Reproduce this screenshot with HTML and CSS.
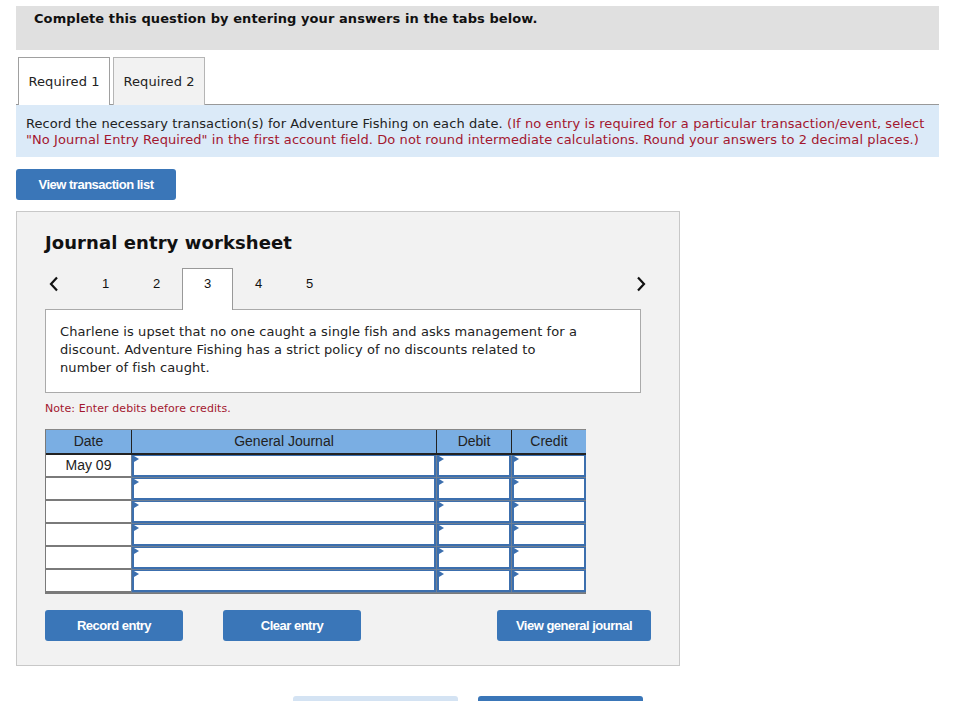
FILE: index.html
```html
<!DOCTYPE html>
<html>
<head>
<meta charset="utf-8">
<link rel="stylesheet" href="styles.css">
</head>
<body>
<div class="page">
  <div class="banner">Complete this question by entering your answers in the tabs below.</div>

  <div class="tabs">
    <div class="tab active">Required 1</div>
    <div class="tab">Required 2</div>
  </div>

  <div class="info">Record the necessary transaction(s) for Adventure Fishing on each date. <span class="red">(If no entry is required for a particular transaction/event, select "No Journal Entry Required" in the first account field. Do not round intermediate calculations. Round your answers to 2 decimal places.)</span></div>

  <button class="btn btn-list">View transaction list</button>

  <div class="panel">
    <h2 class="title">Journal entry worksheet</h2>
    <div class="nav">
      <span class="arrow">
        <svg width="10" height="16" viewBox="0 0 10 16"><path d="M8 1.5 L2 8 L8 14.5" fill="none" stroke="#111" stroke-width="2.2"/></svg>
      </span>
      <div class="steps">
        <span class="step">1</span>
        <span class="step">2</span>
        <span class="step current">3</span>
        <span class="step">4</span>
        <span class="step">5</span>
      </div>
      <span class="arrow arrow-right">
        <svg width="10" height="16" viewBox="0 0 10 16"><path d="M2 1.5 L8 8 L2 14.5" fill="none" stroke="#111" stroke-width="2.2"/></svg>
      </span>
    </div>
    <div class="desc">Charlene is upset that no one caught a single fish and asks management for a discount. Adventure Fishing has a strict policy of no discounts related to number of fish caught.</div>
    <div class="note">Note: Enter debits before credits.</div>

    <div class="journal">
      <div class="head">Date</div>
      <div class="head">General Journal</div>
      <div class="head">Debit</div>
      <div class="head">Credit</div>

      <div class="date">May 09</div><div class="inp"></div><div class="inp"></div><div class="inp"></div>
      <div class="date"></div><div class="inp"></div><div class="inp"></div><div class="inp"></div>
      <div class="date"></div><div class="inp"></div><div class="inp"></div><div class="inp"></div>
      <div class="date"></div><div class="inp"></div><div class="inp"></div><div class="inp"></div>
      <div class="date"></div><div class="inp"></div><div class="inp"></div><div class="inp"></div>
      <div class="date"></div><div class="inp"></div><div class="inp"></div><div class="inp"></div>
    </div>

    <div class="actions">
      <button class="btn btn-record">Record entry</button>
      <button class="btn btn-clear">Clear entry</button>
      <button class="btn btn-view">View general journal</button>
    </div>
  </div>

  <div class="bottom">
    <div class="bb light"></div>
    <div class="bb dark"></div>
  </div>
</div>
</body>
</html>
```

FILE: styles.css
```css
* { box-sizing: border-box; }
html, body { margin: 0; padding: 0; background: #fff; }
body {
  font-family: "DejaVu Sans", Verdana, sans-serif;
  font-size: 13px;
  letter-spacing: 0.08px;
  color: #222;
  overflow: hidden;
  height: 701px;
}
.page {
  padding: 6px 14px 0 16px;
}
.banner {
  background: #e0e0e0;
  height: 44px;
  padding: 4px 0 0 18px;
  font-weight: bold;
  font-size: 13px;
  line-height: 18px;
  color: #111;
}
.tabs {
  margin-top: 7px;
  display: flex;
  gap: 3px;
  padding-left: 2px;
  border-bottom: 1px solid #999;
  height: 48px;
}
.tab {
  width: 92px;
  height: 48px;
  border: 1px solid #b5b5b5;
  border-bottom: none;
  background: #f2f2f2;
  text-align: center;
  line-height: 48px;
  font-size: 13px;
  color: #222;
}
.tab.active {
  background: #fff;
  border-color: #a0a0a0;
  height: 48px;
  margin-bottom: -1px;
  position: relative;
}
.info {
  background: #dbeaf8;
  padding: 11px 10px 9px 10px;
  line-height: 16px;
  font-size: 13px;
  color: #222;
}
.red { color: #a3172f; }
.btn {
  display: block;
  border: none;
  border-radius: 3px;
  background: #3a76b8;
  color: #fff;
  font-family: "Liberation Sans Narrow", "Liberation Sans", Arial, sans-serif;
  font-stretch: condensed;
  font-weight: bold;
  font-size: 13px;
  letter-spacing: -0.5px;
  height: 31px;
  padding: 0;
  cursor: pointer;
}
.btn-list {
  margin-top: 12px;
  width: 160px;
}
.panel {
  margin-top: 11px;
  width: 664px;
  background: #f2f2f2;
  border: 1px solid #c8c8c8;
  padding: 20px 0 24px 28px;
}
.title {
  margin: 0;
  font-size: 18px;
  font-weight: bold;
  line-height: 22px;
  color: #111;
}
.nav {
  margin-top: 14px;
  display: flex;
  align-items: stretch;
  height: 41px;
  width: 611px;
  position: relative;
}
.arrow {
  display: flex;
  align-items: center;
  padding-left: 4px;
  width: 35px;
  padding-bottom: 10px;
}
.arrow-right {
  margin-left: auto;
  width: auto;
  padding-left: 0;
  padding-right: 10px;
}
.steps {
  display: flex;
}
.step {
  width: 51px;
  text-align: center;
  font-family: "Liberation Sans", Arial, sans-serif;
  font-size: 13px;
  letter-spacing: 0;
  line-height: 32px;
  color: #111;
}
.step.current {
  background: #fff;
  border: 1px solid #999;
  border-bottom: none;
  height: 42px;
  line-height: 30px;
  position: relative;
  z-index: 1;
}
.desc {
  width: 596px;
  background: #fff;
  border: 1px solid #aaa;
  padding: 13px 60px 15px 14px;
  line-height: 18px;
  font-size: 13px;
  color: #222;
}
.note {
  margin-top: 9px;
  color: #a3172f;
  font-size: 11px;
  line-height: 14px;
}
.journal {
  margin-top: 13px;
  display: grid;
  grid-template-columns: 85px 305px 75px 75px;
  grid-auto-rows: 23px;
  grid-template-rows: 25px;
  width: 541px;
  border: 1px solid #7a7a7a;
  border-top: 1px solid #888;
  background: #6f7f93;
}
.head {
  background: #7aaee3;
  font-family: "Liberation Sans", Arial, sans-serif;
  font-size: 14px;
  letter-spacing: 0;
  text-align: center;
  line-height: 22px;
  color: #222;
  border-bottom: 2px solid #222;
  border-left: 1px solid #222;
}
.head:first-child { border-left: none; }
.date {
  background: #fff;
  border-bottom: 2px solid #7a7a7a;
  font-family: "Liberation Sans", Arial, sans-serif;
  font-size: 14px;
  letter-spacing: 0;
  text-align: center;
  line-height: 21px;
  color: #222;
}
.inp {
  position: relative;
  background: #fff;
  border: 2px solid #3c6fae;
  border-top-width: 1px;
  margin-left: 1px;
  margin-bottom: 1px;
}
.inp::before {
  content: "";
  position: absolute;
  left: 0;
  top: 0;
  border-top: 3px solid transparent;
  border-bottom: 3px solid transparent;
  border-left: 5px solid #3c6fae;
}
.actions {
  margin-top: 16px;
  display: flex;
  width: 606px;
}
.btn-record { width: 138px; }
.btn-clear { width: 138px; margin-left: 40px; }
.btn-view { width: 154px; margin-left: auto; }
.bottom {
  margin-top: 30px;
  display: flex;
  gap: 20px;
  padding-left: 277px;
}
.bb {
  width: 165px;
  height: 10px;
  border-radius: 3px 3px 0 0;
}
.bb.light { background: #d4e3f3; }
.bb.dark { background: #3a76b8; }
```
